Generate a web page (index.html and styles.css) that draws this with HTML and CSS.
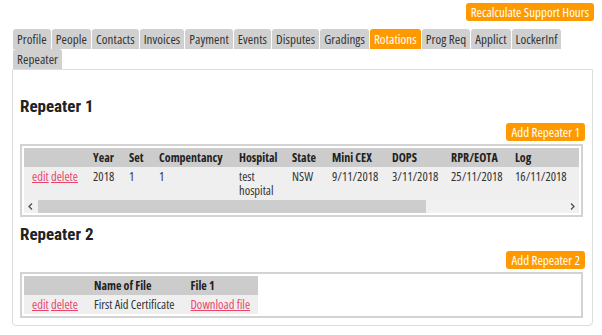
FILE: index.html
```html
<!DOCTYPE html>
<html lang="en">
<head>
    <meta charset="UTF-8">
    <meta name="viewport" content="width=device-width, initial-scale=1.0">
    <title>Rotations - Repeater</title>
    <link rel="stylesheet" href="styles.css">
</head>
<body>
    <div class="page">
        <div class="toolbar">
            <button class="btn">Recalculate Support Hours</button>
        </div>

        <ul class="tabs">
            <li><a href="#">Profile</a></li>
            <li><a href="#">People</a></li>
            <li><a href="#">Contacts</a></li>
            <li><a href="#">Invoices</a></li>
            <li><a href="#">Payment</a></li>
            <li><a href="#">Events</a></li>
            <li><a href="#">Disputes</a></li>
            <li><a href="#">Gradings</a></li>
            <li class="active"><a href="#">Rotations</a></li>
            <li><a href="#">Prog Req</a></li>
            <li><a href="#">Applict</a></li>
            <li><a href="#">LockerInf</a></li>
            <li><a href="#">Repeater</a></li>
        </ul>

        <div class="panel">
            <section class="repeater">
                <h2>Repeater 1</h2>
                <div class="actions">
                    <button class="btn">Add Repeater 1</button>
                </div>
                <div class="grid-box">
                    <div class="scroll">
                        <table class="grid wide">
                            <thead>
                                <tr>
                                    <th class="c-act"></th>
                                    <th class="c-year">Year</th>
                                    <th class="c-set">Set</th>
                                    <th class="c-comp">Compentancy</th>
                                    <th class="c-hosp">Hospital</th>
                                    <th class="c-state">State</th>
                                    <th class="c-cex">Mini CEX</th>
                                    <th class="c-dops">DOPS</th>
                                    <th class="c-rpr">RPR/EOTA</th>
                                    <th>Log</th>
                                </tr>
                            </thead>
                            <tbody>
                                <tr>
                                    <td class="row-actions"><a href="#">edit</a> <a href="#">delete</a></td>
                                    <td>2018</td>
                                    <td>1</td>
                                    <td>1</td>
                                    <td>test hospital</td>
                                    <td>NSW</td>
                                    <td>9/11/2018</td>
                                    <td>3/11/2018</td>
                                    <td>25/11/2018</td>
                                    <td>16/11/2018</td>
                                </tr>
                            </tbody>
                        </table>
                    </div>
                    <div class="scrollbar">
                        <span class="arrow">
                            <svg width="5" height="7" viewBox="0 0 5 7"><path d="M4 0.5L1 3.5L4 6.5" fill="none" stroke="#505050" stroke-width="1.3"/></svg>
                        </span>
                        <div class="track">
                            <div class="thumb" style="width: 73.4%"></div>
                        </div>
                        <span class="arrow">
                            <svg width="5" height="7" viewBox="0 0 5 7"><path d="M1 0.5L4 3.5L1 6.5" fill="none" stroke="#505050" stroke-width="1.3"/></svg>
                        </span>
                    </div>
                </div>
            </section>

            <section class="repeater">
                <h2>Repeater 2</h2>
                <div class="actions">
                    <button class="btn">Add Repeater 2</button>
                </div>
                <div class="grid-box">
                    <table class="grid">
                        <thead>
                            <tr>
                                <th></th>
                                <th>Name of File</th>
                                <th>File 1</th>
                            </tr>
                        </thead>
                        <tbody>
                            <tr>
                                <td class="row-actions"><a href="#">edit</a> <a href="#">delete</a></td>
                                <td>First Aid Certificate</td>
                                <td><a href="#">Download file</a></td>
                            </tr>
                        </tbody>
                    </table>
                </div>
            </section>
        </div>
    </div>
</body>
</html>
```

FILE: styles.css
```css
body {
    margin: 0;
    font-family: "Open Sans", "Noto Sans", sans-serif;
    font-size: 12px;
    font-stretch: 75%;
    color: #333;
    background-color: #fff;
}

.page {
    padding: 3px 8px 0 12px;
}

.toolbar {
    display: flex;
    justify-content: flex-end;
}

.btn {
    font-family: inherit;
    font-size: 13px;
    font-stretch: 75%;
    line-height: 18px;
    height: 18px;
    padding: 0 5px;
    color: #fff;
    background-color: #ff9900;
    border: none;
    border-radius: 3px;
    cursor: pointer;
}

.btn:hover {
    background-color: #f08c00;
}

/* tabs */
.tabs {
    display: flex;
    flex-wrap: wrap;
    list-style: none;
    margin: 8px 1px 0 1px;
    padding: 0;
    font-size: 13px;
    letter-spacing: 0.07px;
}

.tabs li {
    margin-right: 1px;
    background-color: #d0d0d0;
    border-radius: 3px 3px 0 0;
}

.tabs li a {
    display: block;
    padding: 0 4px;
    line-height: 20px;
    color: #333;
    text-decoration: none;
}

.tabs li.active {
    background-color: #ff9900;
}

.tabs li.active a {
    color: #fff;
}

.panel {
    margin-right: 1px;
    padding: 26px 7px 7px 7px;
    border: 1px solid #ddd;
    border-radius: 0 0 4px 4px;
}

/* repeaters */
.repeater h2 {
    margin: 0;
    font-family: Roboto, sans-serif;
    font-size: 17px;
    font-stretch: 75%;
    line-height: 20px;
    color: #222;
}

.repeater + .repeater h2 {
    margin-top: 7px;
}

.actions {
    display: flex;
    justify-content: flex-end;
    margin-top: 7px;
}

.grid-box {
    margin: 3px 2px 0 0;
    padding: 2px;
    border: 2px solid #d3d3d3;
}

.scroll {
    overflow: hidden;
}

.scrollbar {
    display: flex;
    height: 13px;
    background-color: #f1f1f1;
}

.scrollbar .arrow {
    display: flex;
    align-items: center;
    justify-content: center;
    width: 13px;
}

.scrollbar .track {
    flex: 1;
    padding-left: 1px;
}

.scrollbar .thumb {
    height: 100%;
    background-color: #cdcdcd;
}

.grid {
    border-collapse: collapse;
}

.grid.wide {
    width: 753px;
    table-layout: fixed;
}

.grid.wide th {
    box-sizing: border-box;
}

.grid th,
.grid td {
    padding: 2.5px 8px;
    line-height: 14px;
    text-align: left;
    vertical-align: top;
}

.grid th {
    background-color: #cccccc;
    color: #222;
    font-weight: bold;
}

.grid td {
    font-size: 12.5px;
    background-color: #efefef;
}

.grid td.row-actions {
    white-space: nowrap;
}

.grid a {
    color: #e8456b;
}

.c-act { width: 61px; }
.c-year { width: 36px; }
.c-set { width: 30px; }
.c-comp { width: 80px; }
.c-hosp { width: 53px; }
.c-state { width: 40px; }
.c-cex { width: 60px; }
.c-dops { width: 59px; }
.c-rpr { width: 64px; }
```
